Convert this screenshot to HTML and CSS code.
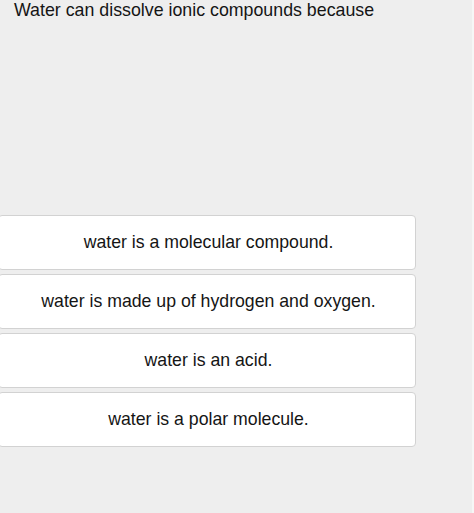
FILE: index.html
```html
<!DOCTYPE html>
<html lang="en">
<head>
    <meta charset="UTF-8">
    <meta name="viewport" content="width=device-width, initial-scale=1.0">
    <title>Question</title>
    <link rel="stylesheet" href="styles.css">
</head>
<body>
    <div class="page">
        <div class="question">Water can dissolve ionic compounds because</div>

        <!-- Answer choices -->
        <div class="choices">
            <div class="choice">water is a molecular compound.</div>
            <div class="choice">water is made up of hydrogen and oxygen.</div>
            <div class="choice">water is an acid.</div>
            <div class="choice">water is a polar molecule.</div>
        </div>
    </div>
</body>
</html>
```

FILE: styles.css
```css
body {
    margin: 0;
    padding: 0;
    background-color: #eeeeee;
    color: #151515;
    font-family: 'Liberation Sans', Arial, sans-serif;
    min-height: 100vh;
}

.page {
    width: 472px;
    min-height: 513px;
    background-color: #eeeeee;
    border-right: 2px solid #f6f6f6;
    overflow: hidden;
}

.question {
    font-size: 17.8px;
    line-height: 20px;
    padding: 0 0 0 14px;
}

.choices {
    display: flex;
    flex-direction: column;
    gap: 4px;
    margin: 195px 0 0 -2px;
    width: 418px;
}

.choice {
    box-sizing: border-box;
    height: 55px;
    display: flex;
    align-items: center;
    justify-content: center;
    padding-left: 3px;
    background: white;
    border: 1px solid #d2d2d2;
    border-radius: 4px;
    font-size: 17.7px;
}
```
